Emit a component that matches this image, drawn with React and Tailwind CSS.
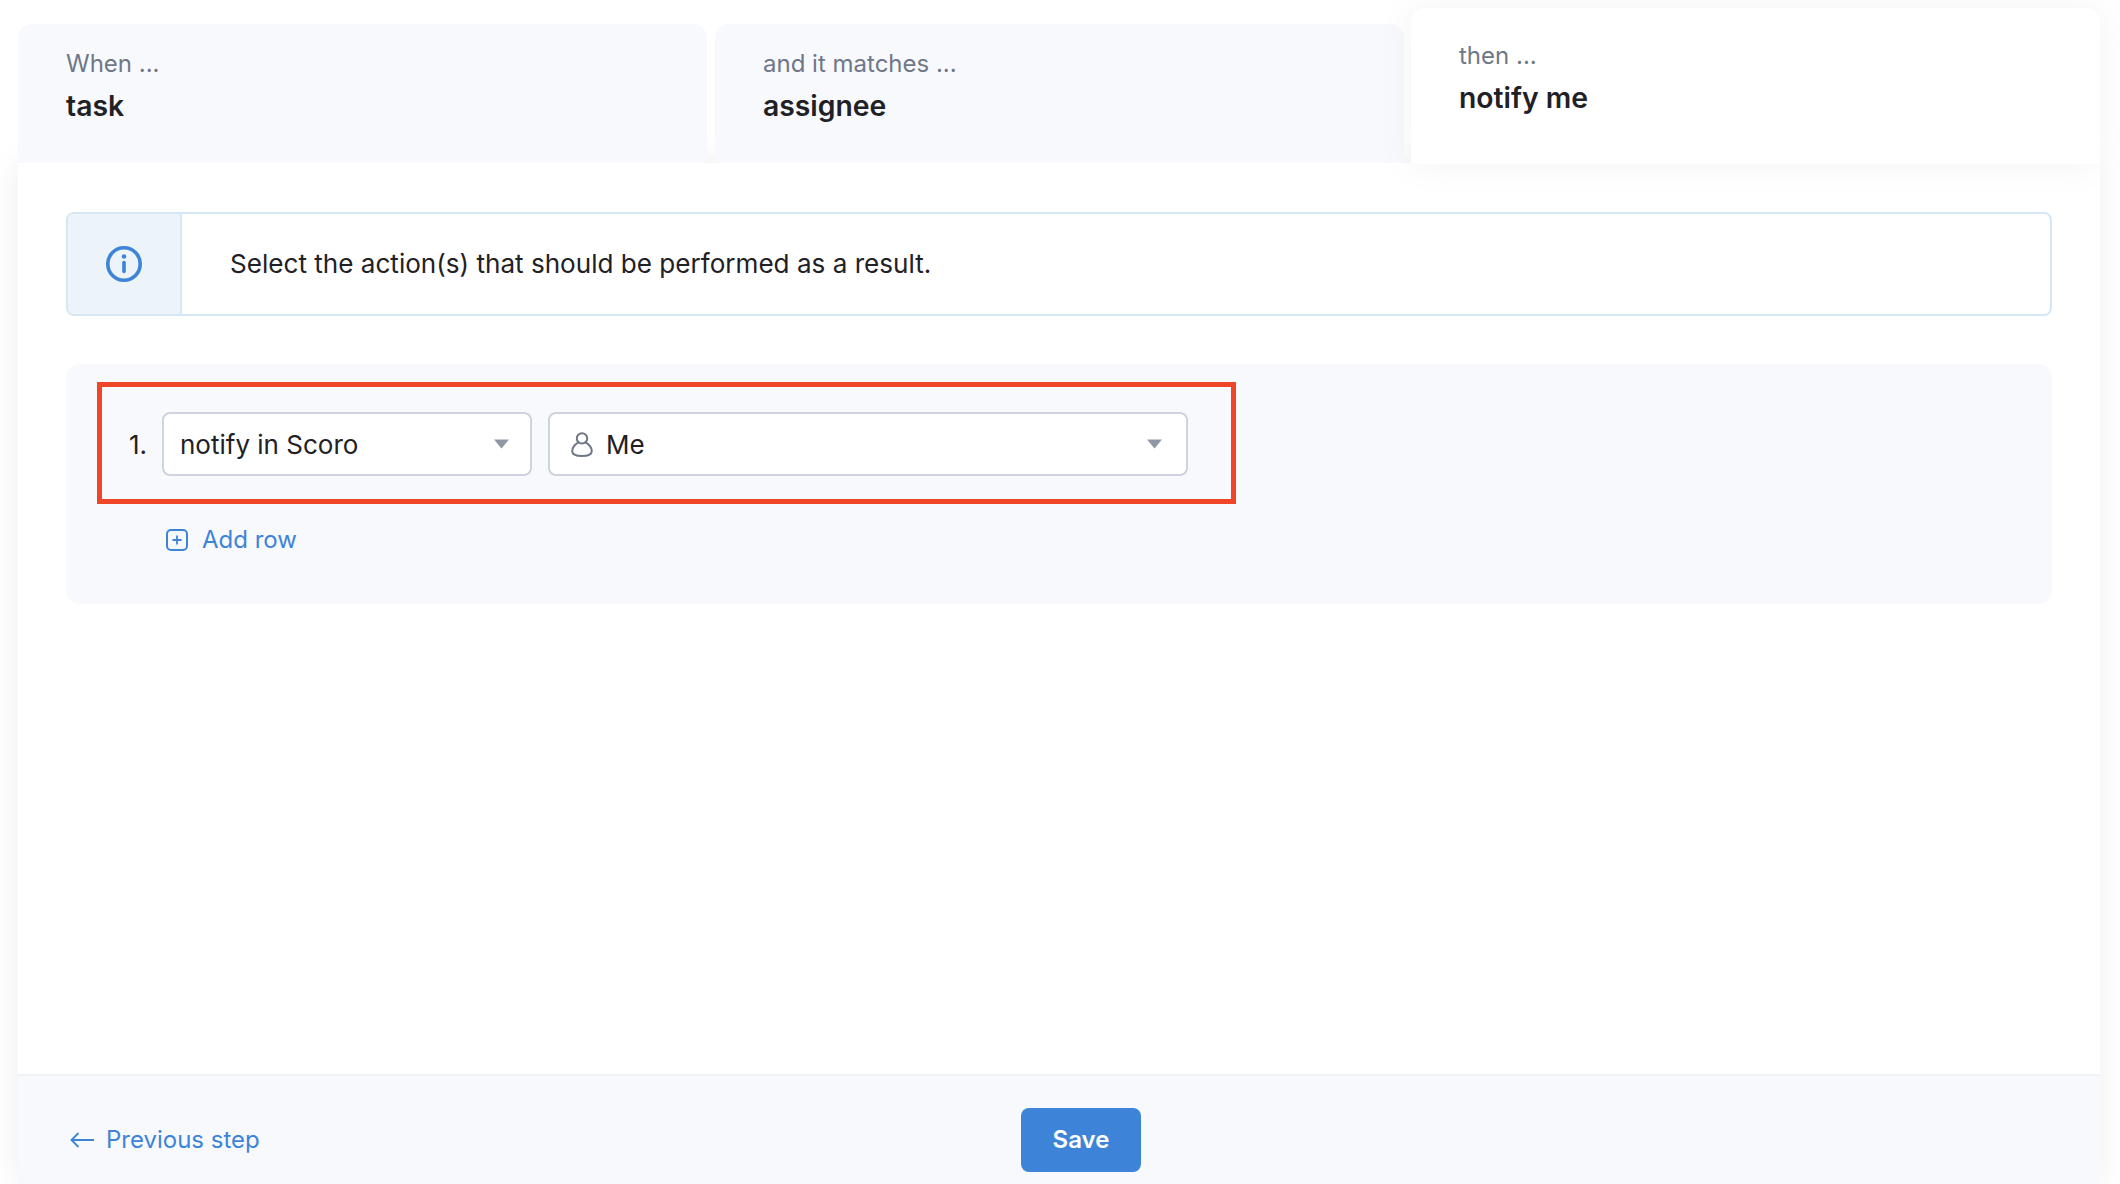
import React from "react";

const Caret = () => (
  <svg width="15" height="10" viewBox="0 0 15 10" className="shrink-0">
    <path d="M0 0.5H15L7.5 9.5Z" fill="#9098a6" />
  </svg>
);

const Tab = ({ label, title, active }) => (
  <div
    className={
      active
        ? "relative z-20 w-[689px] h-[156px] mt-[8px] -ml-[1px] rounded-t-[14px] bg-white pl-[48px] pt-[32px] shadow-[0_0_40px_rgba(0,0,0,0.05)]"
        : "relative z-[15] w-[689px] h-[139px] mt-[24px] rounded-t-[14px] bg-[#f8f9fd] pl-[48px] pt-[24px]"
    }
  >
    <div className="text-[24px] leading-[32px] text-[#6f7787]">{label}</div>
    <div className="mt-[9px] text-[28.3px] leading-[34px] font-semibold text-[#1f2126]">{title}</div>
  </div>
);

export default function App() {
  return (
    <div className="w-[2120px] h-[1184px] overflow-hidden bg-white flex flex-col font-['Inter',sans-serif]">
      <div className="flex items-start pl-[18px] gap-[8px] h-[163px]">
        <Tab label="When ..." title="task" />
        <Tab label="and it matches ..." title="assignee" />
        <Tab label="then ..." title="notify me" active />
      </div>

      <div className="relative z-10 ml-[18px] w-[2082px] h-[1021px] bg-white flex flex-col shadow-[0_0_30px_rgba(0,0,0,0.07)]">
        <div className="flex-1 px-[48px] pt-[49px]">
          <div className="relative z-30 flex h-[104px] w-[1986px] rounded-[8px] border-2 border-[#d3e7f7] overflow-hidden">
            <div className="w-[114px] shrink-0 bg-[#edf4f9] border-r-2 border-[#d3e7f7] flex items-center justify-center">
              <svg width="36" height="36" viewBox="0 0 36 36" fill="none">
                <circle cx="18" cy="18" r="16.2" stroke="#3d84d9" strokeWidth="3.6" />
                <circle cx="18" cy="10.5" r="2.3" fill="#3d84d9" />
                <path d="M18 16.5V25.5" stroke="#3d84d9" strokeWidth="3.6" strokeLinecap="round" />
              </svg>
            </div>
            <div className="flex items-center pl-[48px] text-[26.1px] text-[#1f2126]">
              Select the action(s) that should be performed as a result.
            </div>
          </div>

          <div className="mt-[48px] h-[240px] rounded-[14px] bg-[#f8f9fd] pt-[18px] pl-[31px]">
            <div className="w-[1139px] h-[122px] border-[5px] border-[#ef4627] flex items-center pt-[2px] pl-[27px] text-[26px] text-[#1f2126]">
              <span className="w-[33px] shrink-0">1.</span>
              <div className="w-[370px] h-[64px] rounded-[8px] border-2 border-[#cfd3e0] bg-white flex items-center justify-between pl-[16px] pr-[21px]">
                <span>notify in Scoro</span>
                <Caret />
              </div>
              <div className="ml-[16px] w-[640px] h-[64px] rounded-[8px] border-2 border-[#cfd3e0] bg-white flex items-center pl-[21px] pr-[24px]">
                <svg width="22" height="25" viewBox="0 0 22 25" fill="none" className="shrink-0">
                  <circle cx="11" cy="6.4" r="5.2" stroke="#6f7787" strokeWidth="2" />
                  <path
                    d="M7.4 10.4C3.6 12.8 1.2 16 1.2 19C1.2 22.6 4.4 24 11 24C17.6 24 20.8 22.6 20.8 19C20.8 16 18.4 12.8 14.6 10.4"
                    stroke="#6f7787"
                    strokeWidth="2"
                    strokeLinecap="round"
                  />
                </svg>
                <span className="ml-[13px]">Me</span>
                <span className="ml-auto"><Caret /></span>
              </div>
            </div>
            <div className="mt-[20px] ml-[69px] flex items-center gap-[14px] text-[24px] leading-[32px] text-[#3d84d9]">
              <svg width="22" height="22" viewBox="0 0 22 22" fill="none">
                <rect x="1" y="1" width="20" height="20" rx="4" stroke="#3d84d9" strokeWidth="2" />
                <path d="M11 6.5V15.5M6.5 11H15.5" stroke="#3d84d9" strokeWidth="1.8" />
              </svg>
              <span>Add row</span>
            </div>
          </div>
        </div>

        <div className="h-[110px] border-t-2 border-[#f1f2f7] bg-[#f8f9fd] flex items-center pt-[20px] pl-[52px] pr-[959px]">
          <div className="flex items-center gap-[12px] text-[24px] leading-[32px] text-[#3d84d9]">
            <svg width="24" height="18" viewBox="0 0 24 18" fill="none">
              <path d="M24 9H1.5M8.5 2L1.5 9L8.5 16" stroke="#3d84d9" strokeWidth="1.9" />
            </svg>
            <span>Previous step</span>
          </div>
          <button className="ml-auto w-[120px] h-[64px] rounded-[8px] bg-[#3d84d9] text-white text-[24px] font-semibold">
            Save
          </button>
        </div>
      </div>
    </div>
  );
}
